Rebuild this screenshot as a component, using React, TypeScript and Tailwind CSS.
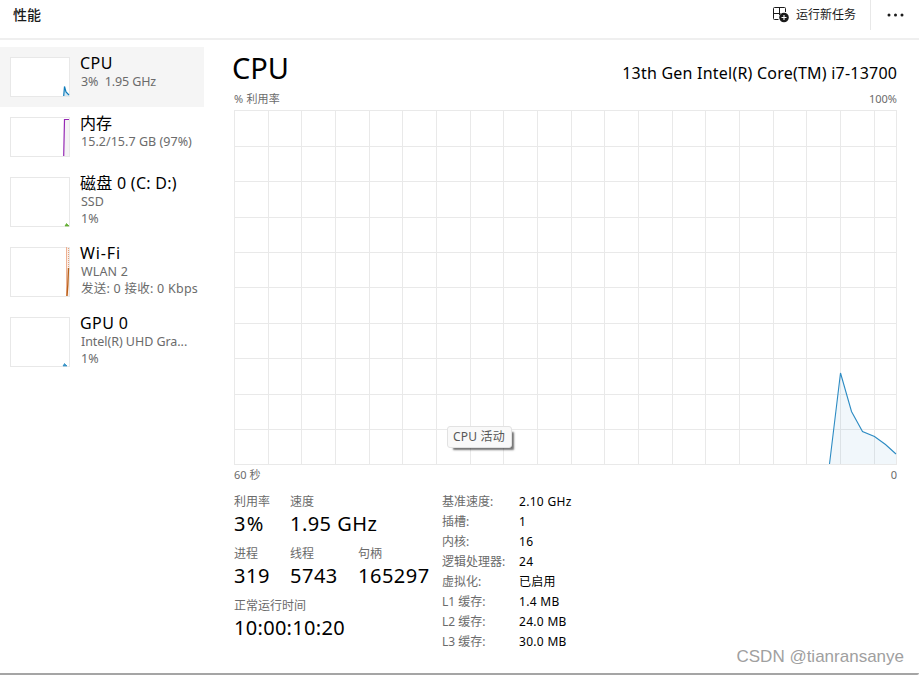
import type { ReactNode } from "react";

type Resource = {
  title: string;
  titleClass: string;
  lines: { text: string; className: string }[];
  tall: boolean;
  selected?: boolean;
  chart: ReactNode;
};

const resources: Resource[] = [
  {
    title: "CPU",
    titleClass: "tracking-[0.5px]",
    lines: [{ text: "3%  1.95 GHz", className: "tracking-[-0.1px]" }],
    tall: false,
    selected: true,
    chart: (
      <>
        <path d="M53.5 39 54.5 29.5 56 35 59 38.5V39Z" fill="#d5e8f3" />
        <path d="M53.7 39 54.5 29.5 56 35 59 38" fill="none" stroke="#117dbb" strokeWidth="1.2" />
      </>
    ),
  },
  {
    title: "内存",
    titleClass: "",
    lines: [{ text: "15.2/15.7 GB (97%)", className: "tracking-[0.04px]" }],
    tall: false,
    chart: (
      <>
        <path d="M53.5 39 55 2.5H59V39Z" fill="#f4f2f4" />
        <path d="M53.7 39 54.5 2.5H59" fill="none" stroke="#9528b4" strokeWidth="1.2" />
      </>
    ),
  },
  {
    title: "磁盘 0 (C: D:)",
    titleClass: "tracking-[0.27px]",
    lines: [
      { text: "SSD", className: "" },
      { text: "1%", className: "" },
    ],
    tall: true,
    chart: <path d="M55 49 56.5 46.5 59 49Z" fill="#6ab14a" stroke="#4da60c" strokeWidth=".6" />,
  },
  {
    title: "Wi-Fi",
    titleClass: "tracking-[0.9px]",
    lines: [
      { text: "WLAN 2", className: "tracking-[0.15px]" },
      { text: "发送: 0 接收: 0 Kbps", className: "tracking-[0.25px]" },
    ],
    tall: true,
    chart: (
      <>
        <path d="M56 49V1H59V49Z" fill="#fbeee6" />
        <path d="M56.5 0V49" stroke="#eeb193" />
        <path d="M58.5 1V22" stroke="#e3a07c" strokeDasharray="1 1" />
        <path d="M57 49 57.8 38 58.5 21" fill="none" stroke="#b9611a" strokeWidth="1.4" />
      </>
    ),
  },
  {
    title: "GPU 0",
    titleClass: "tracking-[0.4px]",
    lines: [
      { text: "Intel(R) UHD Gra...", className: "tracking-[-0.05px]" },
      { text: "1%", className: "" },
    ],
    tall: true,
    chart: <path d="M53 49 54.5 46.5 57 49Z" fill="#4a9fcf" stroke="#117dbb" strokeWidth=".6" />,
  },
];

function ResourceRow({ item }: { item: Resource }) {
  return (
    <li className={`flex pl-[10px] ${item.tall ? "h-[70px]" : "h-[60px]"} ${item.selected ? "bg-[#f5f5f5]" : ""}`}>
      <svg
        className={`mt-[10px] w-[60px] shrink-0 bg-white ${item.tall ? "h-[50px]" : "h-[40px]"}`}
        viewBox={item.tall ? "0 0 60 50" : "0 0 60 40"}
      >
        <rect x=".5" y=".5" width="59" height={item.tall ? 49 : 39} fill="none" stroke="#e8e8e8" />
        {item.chart}
      </svg>
      <div className="flex flex-col pl-[10px] pt-[6px] whitespace-pre">
        <span className={`text-[16px] leading-5 text-black ${item.titleClass}`}>{item.title}</span>
        {item.lines.map((line) => (
          <span key={line.text} className={`pl-px text-[12.5px] leading-[17px] text-[#6b6b6b] ${line.className}`}>
            {line.text}
          </span>
        ))}
      </div>
    </li>
  );
}

const columns = [34.5, 67.5, 101.5, 135.5, 168.5, 202.5, 236.5, 269.5, 303.5, 337.5, 370.5, 404.5, 438.5, 471.5, 505.5, 539.5, 572.5, 606.5, 640.5];
const rows = [36.5, 71.5, 107.5, 142.5, 177.5, 213.5, 248.5, 284.5, 319.5];

function UsageChart() {
  return (
    <svg className="h-[355px] w-[663px]" viewBox="0 0 663 355">
      <g stroke="#e9e9e9" fill="none">
        <rect x=".5" y=".5" width="662" height="354" />
        {columns.map((x) => (
          <path key={x} d={`M${x} 0V355`} />
        ))}
        {rows.map((y) => (
          <path key={y} d={`M0 ${y}H662`} />
        ))}
      </g>
      <path d="M595.5 354 606.5 263 617.5 301.5 628.5 321.5 640.5 326.5 651.5 334.5 662 344V354Z" fill="#117dbb" fillOpacity=".06" />
      <path d="M595.5 354 606.5 263 617.5 301.5 628.5 321.5 640.5 326.5 651.5 334.5 662 344" fill="none" stroke="#2c8bc3" strokeWidth="1.1" />
    </svg>
  );
}

function Stat({ label, value, className, valueClass }: { label: string; value: string; className?: string; valueClass?: string }) {
  return (
    <div className={`flex h-[52px] flex-col whitespace-nowrap pt-px ${className ?? ""}`}>
      <span className="text-[12px] leading-5 text-[#6b6b6b]">{label}</span>
      <span className={`text-[20px] leading-[23px] text-black ${valueClass ?? ""}`}>{value}</span>
    </div>
  );
}

const details = [
  ["基准速度:", "2.10 GHz"],
  ["插槽:", "1"],
  ["内核:", "16"],
  ["逻辑处理器:", "24"],
  ["虚拟化:", "已启用"],
  ["L1 缓存:", "1.4 MB"],
  ["L2 缓存:", "24.0 MB"],
  ["L3 缓存:", "30.0 MB"],
];

export default function App() {
  return (
    <div className="relative flex h-[675px] w-[919px] flex-col overflow-hidden bg-white font-['Noto_Sans','Noto_Sans_CJK_SC',sans-serif]">
      <header className="flex h-[40px] shrink-0 border-b-2 border-[#efefef]">
        <h1 className="pl-[13px] text-[14px] font-medium leading-[30px] text-[#1b1b1b]">性能</h1>
        <button className="ml-auto flex h-[30px] items-center">
          <svg className="h-4 w-4" viewBox="0 0 16 16" fill="none" stroke="#1b1b1b">
            <path d="M5.5 12.5H1.5Q.5 12.5.5 11.5V1.5Q.5.5 1.5.5H11.5Q12.5.5 12.5 1.5V5M6.5.5V6.5M.5 6.5H7.5M6.5 6.5V8" />
            <circle cx="11" cy="10.5" r="4.8" fill="#1b1b1b" stroke="none" />
            <path d="M8.5 10.5H13.5M11 8V13" stroke="#fff" strokeWidth="1.1" />
          </svg>
          <span className="ml-[7px] text-[12px] leading-[30px] text-[#1b1b1b]">运行新任务</span>
        </button>
        <span className="ml-[14px] h-[30px] w-px bg-[#e8e8e8]" />
        <button className="ml-[16px] mr-[14px] flex h-[30px] items-center">
          <svg className="h-[4px] w-[18px]" viewBox="0 0 18 4" fill="#1b1b1b">
            <circle cx="2" cy="2" r="1.5" />
            <circle cx="8.5" cy="2" r="1.5" />
            <circle cx="15" cy="2" r="1.5" />
          </svg>
        </button>
      </header>
      <div className="flex min-h-0 flex-1">
        <ul className="mt-[7px] w-[204px] shrink-0">
          {resources.map((r) => (
            <ResourceRow key={r.title} item={r} />
          ))}
        </ul>
        <main className="ml-[30px] flex w-[663px] flex-col">
          <div className="flex h-[49px] items-start justify-between pt-[8px]">
            <h2 className="ml-[-2px] text-[29px] leading-[40px] text-black">CPU</h2>
            <span className="mr-[-0.2px] pt-[10px] text-[16px] leading-[30px] tracking-[0.22px] text-black">13th Gen Intel(R) Core(TM) i7-13700</span>
          </div>
          <div className="flex h-[21px] justify-between text-[11px] leading-5 text-[#6b6b6b]">
            <span className="tracking-[0.2px]">% 利用率</span>
            <span>100%</span>
          </div>
          <UsageChart />
          <div className="flex h-[26px] justify-between text-[11px] leading-5 text-[#6b6b6b]">
            <span>60 秒</span>
            <span>0</span>
          </div>
          <div className="flex">
            <div className="w-[208px] shrink-0">
              <div className="flex">
                <Stat label="利用率" value="3%" className="w-[56px]" valueClass="tracking-[1.2px]" />
                <Stat label="速度" value="1.95 GHz" valueClass="tracking-[0.45px]" />
              </div>
              <div className="flex">
                <Stat label="进程" value="319" className="w-[56px]" valueClass="tracking-[0.5px]" />
                <Stat label="线程" value="5743" className="w-[68px]" valueClass="tracking-[0.5px]" />
                <Stat label="句柄" value="165297" valueClass="tracking-[0.5px]" />
              </div>
              <Stat label="正常运行时间" value="10:00:10:20" valueClass="tracking-[0.3px]" />
            </div>
            <dl className="grid auto-rows-[20px] grid-cols-[77px_auto] whitespace-nowrap pt-px text-[12px] leading-5">
              {details.map(([k, v]) => (
                <div key={k} className="contents">
                  <dt className="text-[#6b6b6b]">{k}</dt>
                  <dd className="tracking-[0.3px] text-black">{v}</dd>
                </div>
              ))}
            </dl>
          </div>
        </main>
      </div>
      <div className="h-[2px] shrink-0 rounded-br-[3px] bg-[#a5a5a5]" />
      <div className="absolute left-[447px] top-[426px] flex h-[22px] w-[65px] items-center justify-center whitespace-nowrap rounded-[3px] border border-[#e2e2e2] bg-[#f9f9f9] pr-px text-[12px] tracking-[0.2px] text-[#575757] shadow-[4px_4px_2px_-2px_rgba(0,0,0,0.55)]">
        CPU 活动
      </div>
      <span className="absolute right-[15px] top-[645px] whitespace-nowrap font-['Liberation_Sans',sans-serif] text-[17px] leading-6 text-[#a0a0a0]">
        CSDN @tianransanye
      </span>
    </div>
  );
}
